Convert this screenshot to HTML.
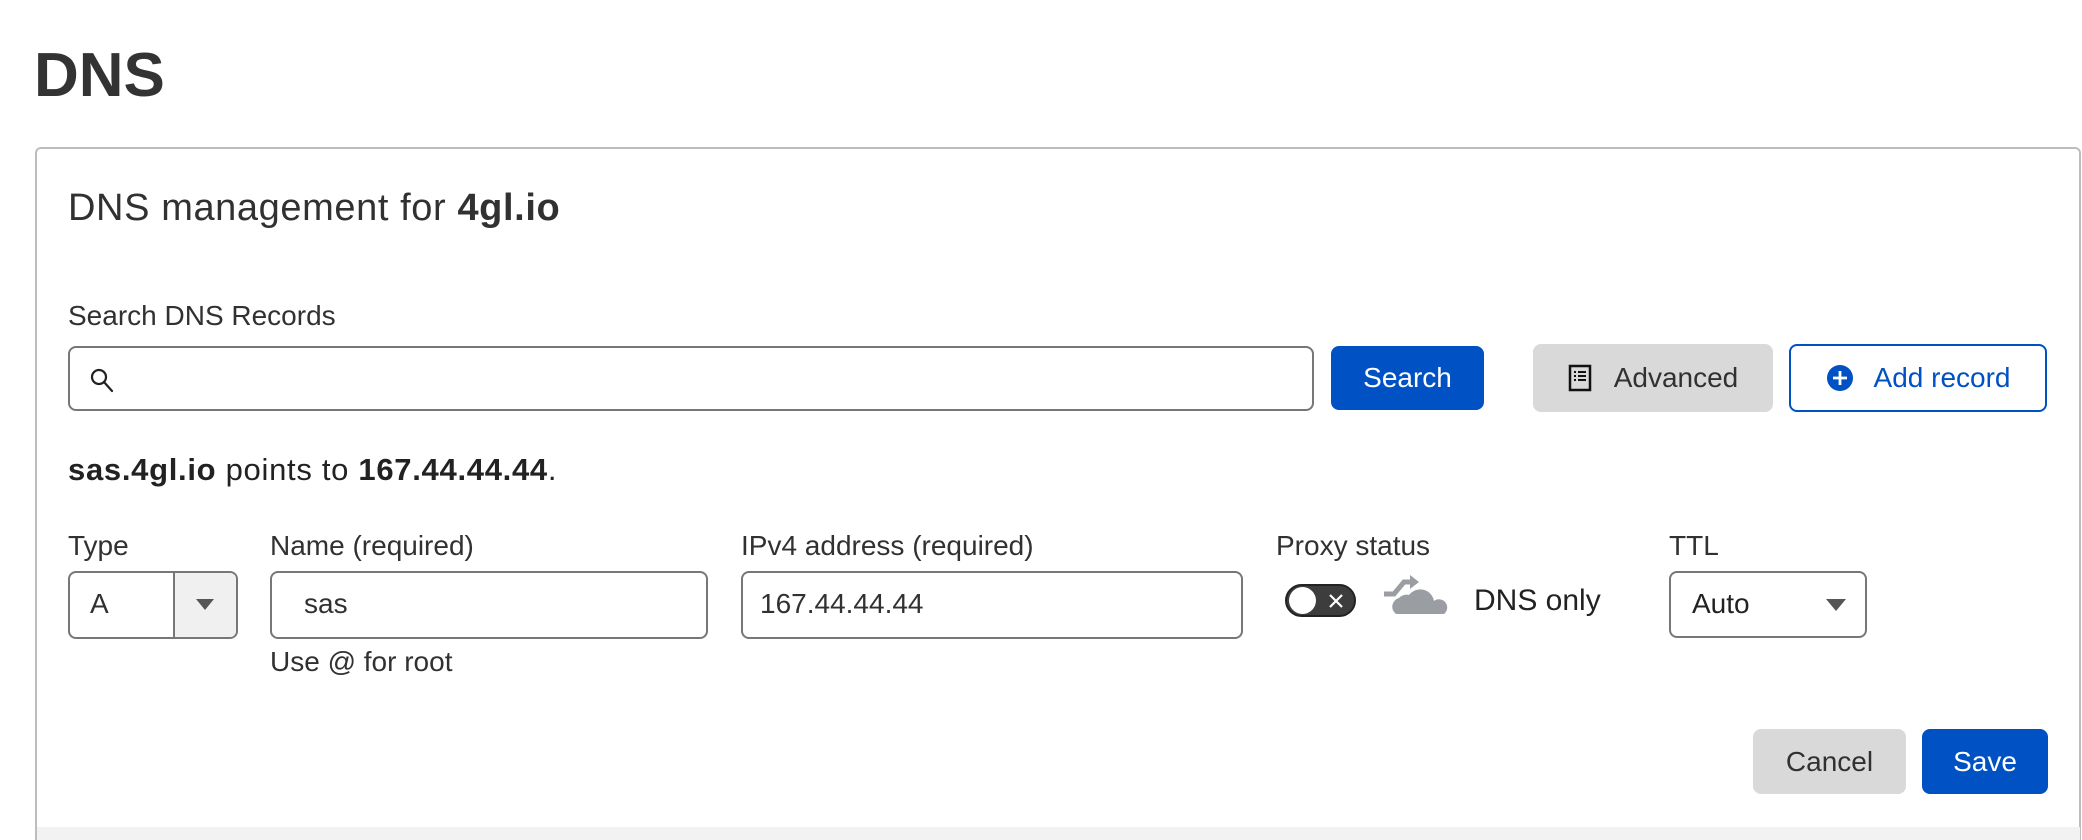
<!DOCTYPE html>
<html><head><meta charset="utf-8"><style>
*{box-sizing:border-box;margin:0;padding:0}
html,body{width:2082px;height:840px;overflow:hidden}
body{background:#fff;font-family:"Liberation Sans",Arial,sans-serif;color:#313131;position:relative}
.a{position:absolute;white-space:nowrap}
.card{position:absolute;left:35px;top:147px;width:2046px;height:720px;border:2px solid #bdbdbd;border-radius:6px;background:#fff;overflow:hidden}
.strip{position:absolute;left:37px;top:827px;width:2043px;height:13px;background:#f2f2f2}
.box{position:absolute;border:2px solid #777;border-radius:8px;background:#fff}
.btn{position:absolute;border-radius:8px;display:flex;align-items:center;justify-content:center;font-size:28px}
.lbl{font-size:28px;color:#313131}
</style></head><body>
<div class="a" style="left:34px;top:40px;font-size:62px;font-weight:bold;color:#333;line-height:72px">DNS</div>
<div class="card"></div>
<div class="strip"></div>
<div class="a" style="left:68px;top:185px;font-size:38px;letter-spacing:0.6px;line-height:46px">DNS management for <b>4gl.io</b></div>
<div class="a lbl" style="left:68px;top:300px;line-height:32px">Search DNS Records</div>
<div class="box" style="left:68px;top:346px;width:1246px;height:65px"></div>
<svg class="a" style="left:88px;top:366px" width="28" height="28" viewBox="0 0 28 28"><circle cx="11" cy="11" r="7" fill="none" stroke="#222" stroke-width="2.2"/><path d="M16 16l8 9" stroke="#222" stroke-width="2.2" stroke-linecap="round"/></svg>
<div class="btn" style="left:1331px;top:346px;width:153px;height:64px;background:#0051c3;color:#fff">Search</div>
<div class="btn" style="left:1533px;top:344px;width:240px;height:68px;background:#d9d9d9;color:#313131">
<svg width="24" height="28" viewBox="0 0 24 28" style="margin-right:22px"><rect x="2" y="2" width="20" height="24" fill="none" stroke="#111" stroke-width="2.5"/><path d="M6 8h2M10 8h8M6 12h2M10 12h8M6 16h2M10 16h8" stroke="#111" stroke-width="2"/></svg>Advanced</div>
<div class="btn" style="left:1789px;top:344px;width:258px;height:68px;border:2px solid #0051c3;color:#0051c3">
<svg width="28" height="28" viewBox="0 0 28 28" style="margin-right:20px"><circle cx="14" cy="14" r="13" fill="#0051c3"/><path d="M14 7v14M7 14h14" stroke="#fff" stroke-width="2.8"/></svg>Add record</div>
<div class="a" style="left:68px;top:451px;font-size:31px;letter-spacing:0.7px;line-height:38px;color:#222"><b>sas.4gl.io</b> points to <b>167.44.44.44</b>.</div>
<div class="a lbl" style="left:68px;top:530px;line-height:32px">Type</div>
<div class="a lbl" style="left:270px;top:530px;line-height:32px">Name (required)</div>
<div class="a lbl" style="left:741px;top:530px;line-height:32px">IPv4 address (required)</div>
<div class="a lbl" style="left:1276px;top:530px;line-height:32px">Proxy status</div>
<div class="a lbl" style="left:1669px;top:530px;line-height:32px">TTL</div>
<div class="box" style="left:68px;top:571px;width:170px;height:68px;overflow:hidden">
<div style="position:absolute;left:103px;top:0;width:65px;height:64px;background:#f0f0f0;border-left:2px solid #777"></div>
<div class="a" style="left:20px;top:14px;font-size:28px;line-height:34px">A</div>
<div class="a" style="left:126px;top:26px;width:0;height:0;border-left:9px solid transparent;border-right:9px solid transparent;border-top:11px solid #555"></div></div>
<div class="box" style="left:270px;top:571px;width:438px;height:68px"><div class="a" style="left:32px;top:14px;font-size:28px;line-height:34px">sas</div></div>
<div class="a lbl" style="left:270px;top:646px;line-height:32px">Use @ for root</div>
<div class="box" style="left:741px;top:571px;width:502px;height:68px"><div class="a" style="left:17px;top:14px;font-size:28px;line-height:34px">167.44.44.44</div></div>
<div class="a" style="left:1285px;top:584px;width:71px;height:33px;border-radius:17px;background:#3d3d3d;border:2px solid #222"></div>
<div class="a" style="left:1289px;top:587px;width:27px;height:27px;border-radius:50%;background:#fff"></div>
<svg class="a" style="left:1325px;top:590px" width="22" height="22" viewBox="0 0 22 22"><path d="M5 5l12 12M17 5L5 17" stroke="#fff" stroke-width="2.2"/></svg>
<svg class="a" style="left:1382px;top:572px" width="66" height="44" viewBox="0 0 66 44"><path d="M2 22h10l10-12h8" fill="none" stroke="#9a9da2" stroke-width="5"/><path d="M28 3l9 7-9 7z" fill="#9a9da2"/><path d="M14 42a9 9 0 0 1 3-16a10 10 0 0 1 10-3a14 14 0 0 1 25 6a8 8 0 0 1 10 13z" fill="#9a9da2"/></svg>
<div class="a" style="left:1474px;top:583px;font-size:30px;line-height:36px;color:#222">DNS only</div>
<div class="box" style="left:1669px;top:571px;width:198px;height:67px">
<div class="a" style="left:21px;top:14px;font-size:28px;line-height:34px;color:#222">Auto</div>
<div class="a" style="left:155px;top:26px;width:0;height:0;border-left:10px solid transparent;border-right:10px solid transparent;border-top:12px solid #555"></div></div>
<div class="btn" style="left:1753px;top:729px;width:153px;height:65px;background:#d9d9d9;color:#313131">Cancel</div>
<div class="btn" style="left:1922px;top:729px;width:126px;height:65px;background:#0051c3;color:#fff">Save</div>
</body></html>
